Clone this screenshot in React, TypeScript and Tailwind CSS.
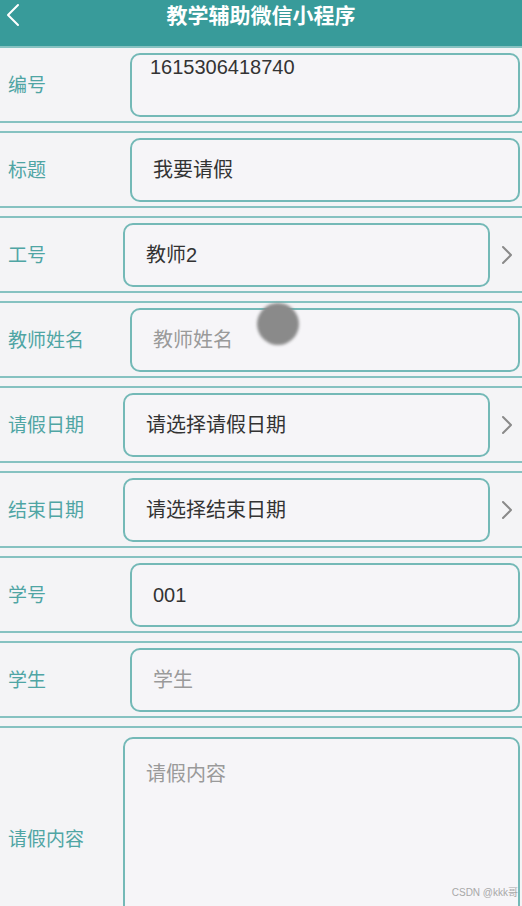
import React from "react";

const FONT = { fontFamily: '"Liberation Sans", "Noto Sans CJK SC", sans-serif' };

function Chevron() {
  return (
    <svg width="14" height="20" viewBox="0 0 14 20" className="shrink-0">
      <polyline points="3,2 11,10 3,18" fill="none" stroke="#8a8a8a" strokeWidth="2" strokeLinecap="round" strokeLinejoin="round" />
    </svg>
  );
}

function Row({
  label,
  value,
  placeholder,
  arrow,
  top,
}: {
  label: string;
  value?: string;
  placeholder?: string;
  arrow?: boolean;
  top?: boolean;
}) {
  return (
    <div className="mb-[8px] flex items-center border-y-2 border-[#86c2c1] pt-[5px] pb-[4px]">
      <div
        className={
          arrow
            ? "w-[123px] shrink-0 pl-[8px] pt-[3px] text-[19px] text-[#4fa5a4]"
            : "w-[130px] shrink-0 pl-[8px] pt-[3px] text-[19px] text-[#4fa5a4]"
        }
      >
        {label}
      </div>
      <div
        className={
          top
            ? "flex h-[64px] flex-1 items-start rounded-[10px] border-2 border-[#74b9b7] bg-[#f6f5f8] pl-[18px] pt-[1px] text-[20px] leading-[22px]"
            : "flex h-[64px] flex-1 items-center rounded-[10px] border-2 border-[#74b9b7] bg-[#f6f5f8] pl-[21px] text-[20px]"
        }
      >
        {value ? (
          <span className="text-[#333333]">{value}</span>
        ) : (
          <span className="text-[#9a9a9a]">{placeholder}</span>
        )}
      </div>
      {arrow ? (
        <div className="flex w-[32px] shrink-0 items-center justify-center pl-[2px]">
          <Chevron />
        </div>
      ) : (
        <div className="w-[2px] shrink-0" />
      )}
    </div>
  );
}

export default function App() {
  return (
    <div className="relative h-[906px] w-[522px] overflow-hidden bg-[#f4f4f6]" style={FONT}>
      <div className="relative flex h-[46px] justify-center bg-[#389b9a] pt-[2px]">
        <svg width="16" height="24" viewBox="0 0 16 24" className="absolute left-[5px] top-[3px]">
          <polyline points="13,2 3,12 13,22" fill="none" stroke="#ffffff" strokeWidth="2" strokeLinecap="round" strokeLinejoin="round" />
        </svg>
        <div className="text-[21px] font-bold leading-[28px] text-white">教学辅助微信小程序</div>
      </div>

      <Row label="编号" value="1615306418740" top />
      <Row label="标题" value="我要请假" />
      <Row label="工号" value="教师2" arrow />
      <Row label="教师姓名" placeholder="教师姓名" />
      <Row label="请假日期" value="请选择请假日期" arrow />
      <Row label="结束日期" value="请选择结束日期" arrow />
      <Row label="学号" value="001" />
      <Row label="学生" placeholder="学生" />

      <div className="flex items-center border-t-2 border-[#86c2c1] pt-[9px]">
        <div className="w-[123px] shrink-0 pl-[8px] pt-[6px] text-[19px] text-[#4fa5a4]">请假内容</div>
        <div className="h-[200px] flex-1 rounded-[10px] border-2 border-[#74b9b7] bg-[#f6f5f8] pl-[21px] pt-[20px] text-[20px] text-[#9a9a9a]">
          请假内容
        </div>
        <div className="w-[2px] shrink-0" />
      </div>

      <div className="absolute left-[257px] top-[303px] h-[42px] w-[42px] rounded-full bg-[#8a8a8a] blur-[1.5px]" />

      <div className="absolute bottom-[6px] right-[4px] text-[10px] text-[#a8a8a8]">CSDN @kkk哥</div>
    </div>
  );
}
